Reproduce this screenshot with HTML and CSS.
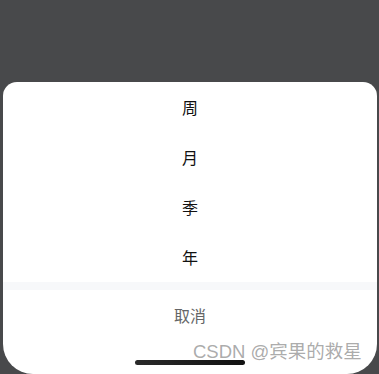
FILE: index.html
```html
<!DOCTYPE html>
<html lang="zh">

<head>
  <meta charset="UTF-8">
  <meta name="viewport" content="width=device-width, initial-scale=1.0">
  <title>选择周期</title>
  <link rel="stylesheet" href="styles.css">
</head>

<body>
  <div class="screen">
    <div class="action-sheet">
      <div class="sheet-items">
        <button class="sheet-item">周</button>
        <button class="sheet-item">月</button>
        <button class="sheet-item">季</button>
        <button class="sheet-item">年</button>
      </div>
      <div class="sheet-gap"></div>
      <button class="sheet-cancel">取消</button>
      <div class="safe-area"></div>

      <div class="home-bar"></div>
      <div class="watermark">CSDN @宾果的救星</div>
    </div>
  </div>
</body>

</html>
```

FILE: styles.css
```css
html,
body {
  margin: 0;
  padding: 0;
  height: 100%;
}

body {
  background-color: #3a3b3d;
  font-family: "Noto Sans CJK SC", "Noto Sans", sans-serif;
  overflow: hidden;
}

.screen {
  height: 374px;
  background-color: #48494b;
  display: flex;
  flex-direction: column;
  justify-content: flex-end;
  padding: 0 2px 0 3px;
}

.action-sheet {
  position: relative;
  background-color: #fff;
  border-radius: 14px 14px 30px 30px;
  display: flex;
  flex-direction: column;
  overflow: hidden;
}

.sheet-items {
  display: flex;
  flex-direction: column;
}

.sheet-item,
.sheet-cancel {
  height: 50px;
  border: none;
  background: none;
  padding: 0;
  font-family: inherit;
  font-size: 16px;
  line-height: 50px;
  text-align: center;
  color: #111;
}

.sheet-gap {
  height: 8px;
  background-color: #f7f8fa;
}

.sheet-cancel {
  color: #646566;
}

.safe-area {
  height: 34px;
}

.home-bar {
  position: absolute;
  left: 132px;
  bottom: 9px;
  width: 110px;
  height: 5px;
  border-radius: 3px;
  background: linear-gradient(to right, #2a2a2a, #111);
}

.watermark {
  position: absolute;
  left: 190px;
  bottom: 11px;
  font-family: "Liberation Sans", "Noto Sans CJK SC", sans-serif;
  font-size: 18.5px;
  line-height: 22px;
  color: rgba(150, 150, 150, 0.8);
  text-shadow: 0 0 1px rgba(255, 255, 255, 0.8);
  white-space: nowrap;
}
```
